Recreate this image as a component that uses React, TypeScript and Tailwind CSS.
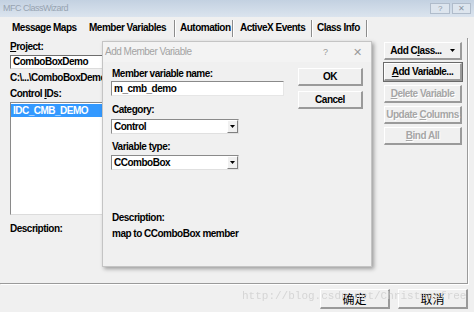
import React from "react";

const ui = "font-['Liberation_Sans',sans-serif] tracking-[-0.5px]";

const Btn = ({
  children,
  className = "",
  disabled = false,
  focused = false,
}: {
  children: React.ReactNode;
  className?: string;
  disabled?: boolean;
  focused?: boolean;
}) => (
  <div
    className={`flex items-center justify-center whitespace-nowrap h-[18px] bg-[#f0f0f0] border-t border-l border-t-white border-l-white border-r-2 border-b-2 border-r-[#9a9a9a] border-b-[#9a9a9a] text-[10px] font-bold leading-none ${
      focused ? "outline outline-1 outline-[#6a6a6a]" : ""
    } ${disabled ? "text-[#a6a6a6] [text-shadow:1px_1px_0_#fff]" : "text-black"} ${className}`}
  >
    {children}
  </div>
);

const Select = ({ value }: { value: string }) => (
  <div className="flex h-[15px] w-[128px] bg-white border border-t-[#8a8a8a] border-l-[#8a8a8a] border-r-[#e0e0e0] border-b-[#e0e0e0]">
    <span className="flex-1 pl-[2px] text-[10px] font-bold leading-[13px] text-black">
      {value}
    </span>
    <span className="w-[11px] h-[13px] bg-[#f0f0f0] border-l border-t border-t-white border-l-white border-r border-b border-r-[#808080] border-b-[#808080] flex items-center justify-center">
      <svg width="5" height="3" viewBox="0 0 5 3">
        <path d="M0 0h5L2.5 3z" fill="#000" />
      </svg>
    </span>
  </div>
);

const TitleBar = () => (
  <div className="h-[17px] flex items-center bg-linear-to-b from-[#c3d1e1] to-[#dbe4ee] pl-[3px] pr-[3px]">
    <span className="text-[9px] text-[#97a3b1] leading-none">MFC ClassWizard</span>
    <div className="ml-auto flex gap-[2px]">
      <div className="w-[20px] h-[11px] border border-[#b0bccb] bg-[#dde5ee] flex items-center justify-center text-[8px] leading-none text-[#8a96a4]">
        ?
      </div>
      <div className="w-[19px] h-[11px] border border-[#b0bccb] bg-[#dde5ee] flex items-center justify-center text-[8px] leading-none text-[#8a96a4]">
        ✕
      </div>
    </div>
  </div>
);

const Sep = () => <div className="self-stretch mt-[3px] mb-[1px] w-[2px] border-l border-l-[#8c8c8c] border-r border-r-white" />;

const Tabs = () => (
  <div className="h-[21px] flex items-center text-[10px] font-bold text-black leading-none whitespace-nowrap">
    <span className="ml-[12px] w-[77px]">Message Maps</span>
    <span className="w-[85px]">Member Variables</span>
    <Sep />
    <span className="ml-[4px] w-[52px]">Automation</span>
    <Sep />
    <span className="ml-[6px] w-[71px]">ActiveX Events</span>
    <Sep />
    <span className="ml-[4px] w-[49px]">Class Info</span>
    <Sep />
  </div>
);

const LeftColumn = () => (
  <div className="w-[300px] pl-[10px] pt-[3px] flex flex-col text-[10px] font-bold text-black leading-[12px] whitespace-nowrap">
    <span>
      <span className="underline">P</span>roject:
    </span>
    <div className="mt-[2px] h-[14px] w-[280px] bg-white border border-t-[#6e6e6e] border-l-[#6e6e6e] border-r-[#dcdcdc] border-b-[#dcdcdc] pl-[2px] leading-[12px]">
      ComboBoxDemo
    </div>
    <span className="mt-[3px]">C:\...\ComboBoxDemo</span>
    <span className="mt-[4px]">
      Control <span className="underline">I</span>Ds:
    </span>
    <div className="mt-[2px] h-[113px] w-[280px] bg-white border border-t-[#8a8a8a] border-l-[#8a8a8a] border-r-[#dcdcdc] border-b-[#dcdcdc] pt-[1px]">
      <div className="h-[13px] bg-[#3399ff] text-white pl-[2px] leading-[13px]">IDC_CMB_DEMO</div>
    </div>
    <span className="mt-[8px]">Description:</span>
  </div>
);

const RightButtons = () => (
  <div className="ml-auto mr-[5px] pt-[4px] w-[78px] flex flex-col gap-[3px]">
    <Btn className="gap-[8px]">
      <span>
        Add C<span className="underline">l</span>ass...
      </span>
      <svg width="5" height="3" viewBox="0 0 5 3">
        <path d="M0 0h5L2.5 3z" fill="#000" />
      </svg>
    </Btn>
    <Btn focused>
      <span>
        <span className="underline">A</span>dd Variable...
      </span>
    </Btn>
    <Btn disabled className="mt-[1px]">
      <span>
        <span className="underline">D</span>elete Variable
      </span>
    </Btn>
    <Btn disabled>
      <span>
        Update <span className="underline">C</span>olumns
      </span>
    </Btn>
    <Btn disabled>
      <span>
        <span className="underline">B</span>ind All
      </span>
    </Btn>
  </div>
);

const AddMemberDialog = () => (
  <div className="absolute left-[102px] top-[41px] w-[270px] h-[226px] bg-[#f0f0f0] border border-[#c4c4c4] shadow-[2px_2px_4px_rgba(0,0,0,0.35)] flex flex-col">
    <div className="h-[20px] flex items-center pl-[2px] bg-[#f3f3f3]">
      <span className="text-[10px] text-[#a3a3a3] leading-none">Add Member Variable</span>
      <span className="ml-auto mr-[25px] text-[9px] text-[#9a9a9a] leading-none">?</span>
      <span className="mr-[10px] text-[11px] text-[#9a9a9a] leading-none">✕</span>
    </div>
    <div className="flex flex-1">
      <div className="w-[184px] pl-[8px] pt-[6px] flex flex-col text-[10px] font-bold text-black leading-[12px] whitespace-nowrap">
        <span className="pl-[1px]">Member variable name:</span>
        <div className="mt-[1px] h-[15px] w-[173px] bg-white border border-t-[#8a8a8a] border-l-[#8a8a8a] border-r-[#e6e6e6] border-b-[#e6e6e6] pl-[2px] leading-[13px]">
          m_cmb_demo
        </div>
        <span className="mt-[8px] pl-[1px]">Category:</span>
        <div className="mt-[3px]">
          <Select value="Control" />
        </div>
        <span className="mt-[7px] pl-[1px]">Variable type:</span>
        <div className="mt-[2px]">
          <Select value="CComboBox" />
        </div>
        <span className="mt-[42px] pl-[1px]">Description:</span>
        <span className="mt-[4px] pl-[1px]">map to CComboBox member</span>
      </div>
      <div className="ml-[11px] pt-[6px] w-[65px] flex flex-col gap-[5px]">
        <Btn>OK</Btn>
        <Btn>Cancel</Btn>
      </div>
    </div>
  </div>
);

const BottomBar = () => (
  <div className="flex justify-end gap-[8px] pr-[6px] pt-[5px] tracking-normal">
    <div className="w-[70px] h-[20px] flex items-center justify-center bg-[#f0f0f0] border-t border-l border-t-white border-l-white border-r-2 border-b-2 border-r-[#9a9a9a] border-b-[#9a9a9a] text-[12px] text-black font-['Noto_Sans_CJK_SC',sans-serif] leading-none">
      确定
    </div>
    <div className="w-[70px] h-[20px] flex items-center justify-center bg-[#f0f0f0] border-t border-l border-t-white border-l-white border-r-2 border-b-2 border-r-[#9a9a9a] border-b-[#9a9a9a] text-[12px] text-black font-['Noto_Sans_CJK_SC',sans-serif] leading-none">
      取消
    </div>
  </div>
);

export default function App() {
  return (
    <div className={`relative w-[474px] h-[312px] overflow-hidden bg-[#f0f0f0] flex flex-col ${ui}`}>
      <TitleBar />
      <Tabs />
      <div className="h-[246px] w-[468px] flex border-r border-b border-r-[#9a9a9a] border-b-[#9a9a9a] shadow-[1px_1px_0_#fff]">
        <LeftColumn />
        <RightButtons />
      </div>
      <BottomBar />
      <AddMemberDialog />
      <span className="absolute left-[242px] top-[291px] text-[11px] leading-none tracking-normal text-[#cfcfcf] font-['Liberation_Mono',monospace] pointer-events-none opacity-80">
        http://blog.csdn.net/Christmasfree
      </span>
    </div>
  );
}
